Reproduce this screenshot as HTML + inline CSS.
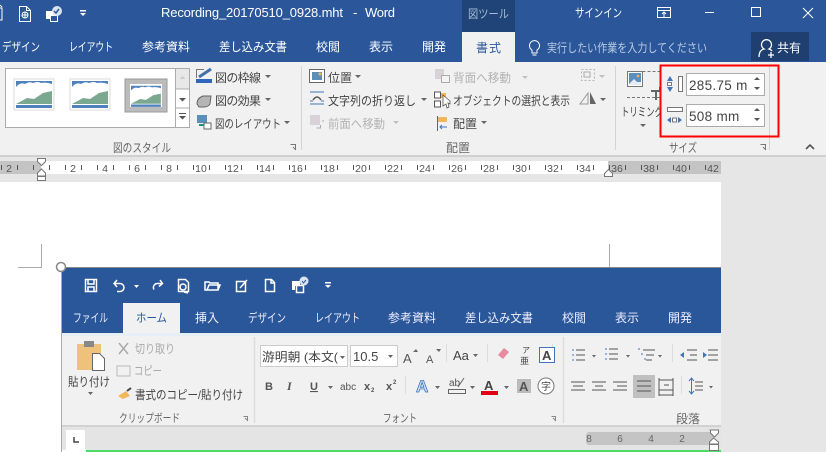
<!DOCTYPE html>
<html><head><meta charset="utf-8">
<style>
html,body{margin:0;padding:0;background:#fff}
svg{display:block;font-family:"Liberation Sans","Noto Sans CJK JP",sans-serif}
</style></head><body>
<svg width="826" height="452" viewBox="0 0 826 452" xmlns="http://www.w3.org/2000/svg">
<defs>
<pattern id="t" x="49" y="161" width="16" height="13" patternUnits="userSpaceOnUse"><rect width="1" height="5" y="4" fill="#555"/></pattern>
<g id="pic"><rect width="36" height="28" fill="#fff"/><rect y="1" width="36" height="9" fill="#4f81bd"/><path d="M0 7q4-5 9-3q4-3 8-1q5-2 8 0q5-1 11 1v10H0z" fill="#fff"/><path d="M0 24l11-6l7 1l9-6l9-2v13z" fill="#7aa890"/><rect y="25" width="36" height="3" fill="#4f81bd"/></g>
<filter id="b"><feGaussianBlur stdDeviation="0.3"/></filter>
</defs>
<rect width="826" height="452" fill="#fff"/>
<!-- title -->
<rect width="826" height="62" fill="#2b579a"/>
<rect x="462" width="53" height="32" fill="#204478"/>
<rect x="462" y="32" width="53" height="30" fill="#f1f1f1"/>
<rect x="751" y="32" width="58" height="29" fill="#1e3f70"/>
<g fill="none" stroke="#fff" stroke-width="1">
<path d="M0 8h2v12h-2M2 7l-2-2"/>
<path d="M19.500 6.500h7l4 4v11h-11zM26.500 6.500v4h4"/><circle cx="25" cy="15" r="3"/><path d="M25 12v6M22 15h6"/>
<rect x="50.500" y="15.500" width="7" height="6"/>
<path d="M657.500 7.500h13v10h-13zM657.500 10.500h13M664 17v-5M662 14l2-2 2 2"/>
<path d="M705 12.500h9"/><rect x="751.500" y="7.500" width="9" height="9" stroke-width="1"/>
<path d="M803 8l10 10M813 8l-10 10"/>
<path d="M537 53v-3a5 5 0 1 0-5 0v3zM532.500 55h4"/>
</g>
<path d="M46 11h7l2 2v2h-4v4h-5z" fill="#fff"/>
<rect x="80" y="10" width="6" height="1.500" fill="#fff"/><path d="M80 13h6l-3 3z" fill="#fff"/>
<circle cx="57" cy="11" r="5" fill="#d8e2f0"/><path d="M54 11l2 2 3-4" fill="none" stroke="#2b579a" stroke-width="1.500"/>
<g fill="#fff" font-size="12">
<text x="161" y="17" font-size="13" textLength="182">Recording_20170510_0928.mht</text>
<text x="353" y="17" font-size="13">-</text>
<text x="365" y="17" font-size="13" textLength="30">Word</text>
<text x="575" y="17" textLength="47" lengthAdjust="spacingAndGlyphs">サインイン</text>
<text x="2" y="51" textLength="38" lengthAdjust="spacingAndGlyphs">デザイン</text>
<text x="69" y="51" textLength="44" lengthAdjust="spacingAndGlyphs">レイアウト</text>
<text x="142" y="51" textLength="48">参考資料</text>
<text x="219" y="51" textLength="68" lengthAdjust="spacingAndGlyphs">差し込み文書</text>
<text x="316" y="51" textLength="24">校閲</text>
<text x="369" y="51" textLength="24">表示</text>
<text x="422" y="51" textLength="24">開発</text>
<text x="777" y="52" textLength="24">共有</text>
</g>
<text x="468" y="18" font-size="12" fill="#a9bdd8" textLength="41" lengthAdjust="spacingAndGlyphs">図ツール</text>
<text x="476" y="52" font-size="12" fill="#2b579a" textLength="25">書式</text>
<text x="547" y="52" font-size="12" fill="#b9cbe2" textLength="160" lengthAdjust="spacingAndGlyphs">実行したい作業を入力してください</text>
<path d="M759 57q0-7 5-8a5 5 0 1 1 5 0q2 .6 3 2M771 52v6M768 55h6" fill="none" stroke="#fff" stroke-width="1.300"/>

<!-- ribbon -->
<rect y="62" width="826" height="93" fill="#f1f1f1"/>
<rect y="155" width="826" height="2" fill="#d0d0d0"/>
<rect y="157" width="826" height="25" fill="#e6e6e6"/>
<!-- gallery -->
<rect x="5.500" y="68.500" width="184" height="59" fill="#fff" stroke="#ababab"/>
<rect x="176" y="69" width="13" height="20" fill="#e8e8e8"/>
<path d="M175.500 69v58M176 89h13M176 108h13" stroke="#ababab" fill="none"/>
<path d="M182.500 76l-3 3h6z" fill="#ccc"/><path d="M179 98h7l-3.500 3.500z" fill="#555"/><path d="M179 116h7l-3.500 3.500z" fill="#555"/><rect x="179" y="113" width="7" height="1" fill="#555"/>
<rect x="14" y="79" width="40" height="31" fill="#fff" stroke="#ccc" stroke-width=".7"/><use href="#pic" x="16" y="80"/>
<rect x="70" y="79" width="40" height="31" fill="#fff" stroke="#ccc" stroke-width=".7"/><use href="#pic" x="72" y="80"/>
<rect x="125" y="79" width="42" height="33" fill="#bbb" stroke="#999"/><rect x="130" y="84" width="32" height="23" fill="#fff"/><use href="#pic" transform="translate(131 85) scale(.83 .78)"/>
<!-- group icons -->
<rect x="196" y="79" width="16" height="4" fill="#2f67bd"/><path d="M199 77l12-8" stroke="#4472a8" stroke-width="3"/><path d="M196.500 69v9M196 69.500h8" stroke="#777"/>
<path d="M197 104q0-6 6-8h8l-1 8q-2 3-6 3h-5z" fill="#b5b5b5" stroke="#666"/>
<rect x="197" y="115" width="10" height="8" fill="#5b8fb9"/><rect x="204" y="123" width="7" height="6" fill="#fff" stroke="#666"/><path d="M199 125h5" stroke="#2b8c76" stroke-width="2"/>
<rect x="309.500" y="69.500" width="15" height="13" fill="#fff" stroke="#666"/><rect x="312" y="72" width="10" height="8" fill="#5b8fb9"/><circle cx="320" cy="74" r="1.500" fill="#f0b85a"/>
<path d="M310 92h14M310 104h14M310 101h3M321 101h3" stroke="#3f75bb"/><path d="M313 100q4-6 8 0" stroke="#555" stroke-width="1.500" fill="none"/>
<rect x="310" y="115" width="10" height="10" fill="#d6d2d6"/><path d="M320.500 125v3h-4M322 121h2" stroke="#aaa" fill="none"/>
<rect x="435" y="69" width="9" height="10" fill="#d6d2d6"/><rect x="441.500" y="75.500" width="8" height="7" fill="#f4f4f4" stroke="#aaa"/>
<path d="M434.500 92h6v6h-6zM434.500 101h6v6h-6z" fill="#fff" stroke="#555"/><rect x="441" y="93" width="5" height="5" fill="#f0b85a"/><path d="M443 95l7 6v3l-2-1 1 4-2 1-1-4-3 2z" fill="#fff" stroke="#555" stroke-width=".8"/>
<path d="M437.500 116v15" stroke="#666"/><rect x="438" y="117" width="9" height="5" fill="#f0b85a"/><path d="M447 127h-7M442 125l-2 2 2 2" stroke="#3f75bb" fill="none"/>
<path d="M581.500 69.500h13v11h-13z" fill="none" stroke="#b5b5b5" stroke-dasharray="2 2"/><rect x="584" y="72" width="6" height="5" fill="none" stroke="#aaa"/>
<path d="M588 93v11h-8z" fill="none" stroke="#999"/><path d="M590 92l6 12h-6z" fill="#666"/>
<g fill="#444" font-size="12">
<text x="215" y="82" textLength="46">図の枠線</text>
<text x="215" y="105" textLength="46">図の効果</text>
<text x="215" y="128" textLength="66" lengthAdjust="spacingAndGlyphs">図のレイアウト</text>
<text x="328" y="82" textLength="24">位置</text>
<text x="328" y="105" textLength="88" lengthAdjust="spacingAndGlyphs">文字列の折り返し</text>
<text x="453" y="105" textLength="117" lengthAdjust="spacingAndGlyphs">オブジェクトの選択と表示</text>
<text x="453" y="128" textLength="24">配置</text>
</g>
<g fill="#b3b3b3" font-size="12">
<text x="328" y="128" textLength="57" lengthAdjust="spacingAndGlyphs">前面へ移動</text>
<text x="453" y="82" textLength="58" lengthAdjust="spacingAndGlyphs">背面へ移動</text>
</g>
<g fill="#666" font-size="12">
<text x="113" y="152" textLength="58" lengthAdjust="spacingAndGlyphs">図のスタイル</text>
<text x="446" y="152" textLength="24">配置</text>
<text x="669" y="152" textLength="28" lengthAdjust="spacingAndGlyphs">サイズ</text>
</g>
<g fill="#666"><path d="M265 75h6l-3 3zM265 98h6l-3 3zM284 121h6l-3 3zM355 75h6l-3 3zM421 98h6l-3 3zM481 121h6l-3 3zM600 98h6l-3 3zM640 124h6l-3 3z"/></g>
<g fill="#c0c0c0"><path d="M393 121h6l-3 3zM522 76h6l-3 3zM599 75h6l-3 3z"/></g>
<path d="M301.500 66v84M615.500 66v84M769.500 66v84" stroke="#d4d4d4"/>
<path d="M290.500 144.500h5v5M293 147l3 3M760.500 144.500h5v5M763 147l3 3" stroke="#777" fill="none"/>
<path d="M806 149l4-4 4 4" stroke="#555" stroke-width="1.600" fill="none"/>
<!-- crop -->
<path d="M627 97.500h34V72" stroke="#777" fill="none" stroke-dasharray="3 2"/><path d="M642.500 71.500h18" stroke="#777" stroke-dasharray="3 2"/>
<rect x="627.500" y="71.500" width="15" height="15" fill="#fff" stroke="#777"/><rect x="629" y="73" width="12" height="12" fill="#5c8fbf"/><path d="M629 84l5-5 3 3 4 0v3h-12z" fill="#e5edf5"/><circle cx="638" cy="76" r="1.300" fill="#f0b85a"/>
<path d="M651 91h9v-4M656 100v-9" stroke="#666" stroke-width="2" fill="none"/>
<svg x="620" y="104" width="41" height="20"><text x="1" y="12" font-size="12" fill="#444" textLength="42" lengthAdjust="spacingAndGlyphs">トリミング</text></svg>
<!-- size -->
<rect x="686.500" y="73.500" width="78" height="22" fill="#fff" stroke="#ababab"/>
<rect x="686.500" y="104.500" width="78" height="22" fill="#fff" stroke="#ababab"/>
<svg x="689" y="74" width="58" height="22"><text x="0" y="16" font-size="13.500" fill="#444" letter-spacing=".3">285.75 mm</text></svg>
<text x="689" y="121" font-size="13.500" fill="#444" letter-spacing=".3">508 mm</text>
<path d="M754 80h6l-3-3zM754 87h6l-3 3zM754 111h6l-3-3zM754 118h6l-3 3z" fill="#555"/>
<rect x="678.500" y="76.500" width="4" height="15" fill="#fff" stroke="#777"/>
<path d="M667 81l3-5 3 5zM667 87l3 5 3-5z" fill="#3f75bb"/><rect x="667.500" y="82.500" width="4" height="3" fill="#fff" stroke="#777"/>
<path d="M667.500 107.500h15v4h-15z" fill="#fff" stroke="#777"/>
<path d="M667 120l4-3v6zM682 120l-4-3v6z" fill="#3f75bb"/><rect x="672.500" y="118" width="4" height="4" fill="#fff" stroke="#777"/>
<rect x="660.500" y="65.500" width="118" height="71" fill="none" stroke="#f00" stroke-width="2"/>

<!-- main ruler -->
<rect x="0" y="161" width="721" height="13" fill="#fff"/>
<rect x="0" y="161" width="41" height="13" fill="#c4c4c4"/>
<rect x="608" y="161" width="113" height="13" fill="#c4c4c4"/>
<rect x="0" y="161" width="721" height="13" fill="url(#t)"/>
<g font-size="10.500" fill="#555" text-anchor="middle">
<text x="9" y="172">2</text><text x="73" y="172">2</text><text x="105" y="172">4</text><text x="137" y="172">6</text><text x="169" y="172">8</text><text x="201" y="172">10</text><text x="233" y="172">12</text><text x="265" y="172">14</text><text x="297" y="172">16</text><text x="329" y="172">18</text><text x="361" y="172">20</text><text x="393" y="172">22</text><text x="425" y="172">24</text><text x="457" y="172">26</text><text x="489" y="172">28</text><text x="521" y="172">30</text><text x="553" y="172">32</text><text x="585" y="172">34</text><text x="617" y="172">36</text><text x="649" y="172">38</text><text x="681" y="172">40</text><text x="713" y="172">42</text>
</g>
<path d="M37.500 158.500h8v3l-4 4-4-4zM37.500 176v-3l4-4 4 4v3zM37.500 176.500h8v4h-8z" fill="#fff" stroke="#777"/>
<path d="M604.500 176.500v-3l4-4 4 4v3z" fill="#fff" stroke="#777"/>
<!-- page -->
<rect x="0" y="182" width="721" height="270" fill="#fff"/>
<rect x="721" y="182" width="105" height="270" fill="#e6e6e6"/>
<path d="M18 267.500h23.500V244M609.500 244v24" stroke="#aaa" fill="none"/>

<!-- embedded screenshot -->
<g filter="url(#b)">
<rect x="61" y="268" width="660" height="65" fill="#2b579a"/>
<rect x="123" y="303" width="57" height="30" fill="#f1f1f1"/>
<rect x="62" y="333" width="659" height="92" fill="#f1f1f1"/>
<rect x="62" y="333" width="659" height="3" fill="#e6eff8"/>
<rect x="62" y="425" width="659" height="25" fill="#e4e4e4"/>
<rect x="62" y="425" width="659" height="2" fill="#d2d2d2"/>
<rect x="66" y="430" width="19" height="20" fill="#fff"/>
<path d="M74 437v5h5" stroke="#444" stroke-width="1.500" fill="none"/>
<rect x="586" y="432" width="128" height="13" rx="3" fill="#c4c4c4"/>
<rect x="86" y="450" width="635" height="2" fill="#4fdb6a"/>
<g fill="none" stroke="#fff" stroke-width="1.500">
<path d="M85.500 279.500h11v12h-11zM88 280v4h6v-4M88 291v-4h6v4"/>
<path d="M117 280l-3 3.500 3 3.500M114 283.500h6a4 4 0 0 1 0 8h-3"/>
<path d="M160 280l2.500 3.500-3.500 3M162 283.500h-4a4 4 0 0 0-4 6"/>
<path d="M178.500 279.500h7l3 3v9h-10zM184 292l4 1"/><circle cx="183" cy="287" r="3"/>
<path d="M205 290v-8h4l1 1h8v7zM207 290l2-5h11l-2 5z"/>
<path d="M236.500 281.500h9v10h-9zM240 288l7-8"/>
<path d="M265.500 279.500h6l3 3v9h-9zM271 280v3h3"/>
<rect x="296.500" y="285.500" width="7" height="7"/>
</g>
<path d="M292 281h8v5h-5v4h-3z" fill="#fff"/><rect x="325" y="282" width="6" height="1.500" fill="#fff"/><path d="M325 285h6l-3 3z" fill="#fff"/>
<circle cx="304" cy="281" r="4.500" fill="#dbe5f2"/><path d="M302 281l1.500 2 2.500-3" stroke="#2b579a" fill="none"/>
<path d="M134 285h5l-2.500 3z" fill="#fff"/>
<g font-size="12" fill="#eef">
<text x="73" y="322" textLength="35" lengthAdjust="spacingAndGlyphs">ファイル</text>
<text x="195" y="322" textLength="24">挿入</text>
<text x="248" y="322" textLength="38" lengthAdjust="spacingAndGlyphs">デザイン</text>
<text x="315" y="322" textLength="45" lengthAdjust="spacingAndGlyphs">レイアウト</text>
<text x="388" y="322" textLength="48">参考資料</text>
<text x="465" y="322" textLength="68" lengthAdjust="spacingAndGlyphs">差し込み文書</text>
<text x="562" y="322" textLength="24">校閲</text>
<text x="615" y="322" textLength="24">表示</text>
<text x="668" y="322" textLength="24">開発</text>
</g>
<text x="136" y="322" font-size="12" fill="#2b579a" textLength="31" lengthAdjust="spacingAndGlyphs">ホーム</text>
<rect x="77" y="344" width="24" height="26" fill="#eec27a"/><rect x="84" y="341" width="10" height="6" fill="#888"/>
<path d="M92.500 353.500h7l5 5v12h-12z" fill="#fff" stroke="#666"/>
<rect x="260.500" y="345.500" width="87" height="21" fill="#fff" stroke="#ccc"/>
<rect x="350.500" y="345.500" width="47" height="21" fill="#fff" stroke="#ccc"/>
<g font-size="12" fill="#444">
<text x="68" y="386" textLength="42" lengthAdjust="spacingAndGlyphs">貼り付け</text>
<text x="135" y="399" textLength="108" lengthAdjust="spacingAndGlyphs">書式のコピー/貼り付け</text>
<text x="262" y="361" textLength="76" lengthAdjust="spacingAndGlyphs">游明朝 (本文(</text>
<text x="353" y="361" font-family="Liberation Sans" font-size="13">10.5</text>
<text x="453" y="360" font-family="Liberation Sans" font-size="13">Aa</text>
</g>
<g font-size="12" fill="#aaa">
<text x="135" y="353" textLength="40" lengthAdjust="spacingAndGlyphs">切り取り</text>
<text x="134" y="375" textLength="28" lengthAdjust="spacingAndGlyphs">コピー</text>
</g>
<path d="M119 343l9 11M128 343l-9 11" stroke="#aaa" stroke-width="1.500"/><rect x="117" y="366" width="13" height="10" fill="none" stroke="#bbb"/>
<path d="M118 396l8-5 4 5-7 3z" fill="#f0b85a"/><path d="M127 391l4-3" stroke="#444" stroke-width="2"/>
<path d="M88 392h5l-2.500 3z" fill="#666"/>
<g font-size="11.500" fill="#666">
<text x="119" y="422" textLength="61" lengthAdjust="spacingAndGlyphs">クリップボード</text>
<text x="383" y="422" textLength="34" lengthAdjust="spacingAndGlyphs">フォント</text>
<text x="676" y="423" font-size="12" textLength="24">段落</text>
</g>
<path d="M243.500 416.500h4v4M245 418l3 3M551.500 416.500h4v4M553 418l3 3" stroke="#888" fill="none"/>
<path d="M254.500 337v86M563.500 337v86" stroke="#ddd" stroke-width="1.500"/>
<path d="M340 356h5l-2.500 3zM388 355h5l-2.500 3zM473 354h5l-2.500 3zM328 386h5l-2.500 3zM435 386h5l-2.500 3zM470 386h5l-2.500 3zM504 386h5l-2.500 3zM592 355h4l-2 2.500zM626 355h4l-2 2.500zM658 355h4l-2 2.500zM709 386h4l-2 2.500z" fill="#666"/>
<g fill="#555" font-family="Liberation Sans" font-weight="bold">
<text x="403" y="363" font-size="13" font-weight="normal">A</text><text x="426" y="363" font-size="11" font-weight="normal">A</text>
<text x="265" y="390" font-size="11">B</text><text x="287" y="390" font-size="12" font-style="italic" font-family="Liberation Serif">I</text><text x="310" y="390" font-size="11" text-decoration="underline">U</text>
<text x="340" y="390" font-size="10" font-weight="normal">abc</text><text x="364" y="390" font-size="11">x</text><text x="371" y="392" font-size="6">2</text><text x="386" y="390" font-size="11">x</text><text x="393" y="384" font-size="6">2</text>
</g>
<path d="M413 352l3-3 2 3zM436 349l3 3 2-3z" fill="#666"/>
<path d="M446.500 344v18M487.500 344v18M552.500 344v18M405.500 376v18M672.500 344v18M681.500 376v18" stroke="#ddd"/>
<text x="416" y="392" font-size="17" fill="#cfe0f5" stroke="#3f75bb" stroke-width=".8" font-family="Liberation Sans" font-weight="bold">A</text>
<text x="449" y="386" font-size="10" fill="#555" font-family="Liberation Sans">ab</text><path d="M448.500 389.500h17v4h-17zM458 387l6-9" stroke="#666" fill="none"/>
<text x="484" y="390" font-size="13" fill="#444" font-family="Liberation Sans" font-weight="bold">A</text><rect x="481" y="391" width="17" height="4" fill="#e00012"/>
<rect x="517" y="379" width="14" height="14" fill="#bbb"/><text x="519" y="391" font-size="13" fill="#555" font-family="Liberation Sans" font-weight="bold">A</text>
<circle cx="546" cy="386" r="8" fill="#fff" stroke="#777"/><text x="541" y="390" font-size="10" fill="#444">字</text>
<path d="M498 355l6-7 5 4-6 7z" fill="#e88aa0"/>
<text x="520" y="364" font-size="9" fill="#444">亜</text><text x="522" y="353" font-size="8" fill="#444">ア</text>
<rect x="539.500" y="347.500" width="15" height="15" fill="#fff" stroke="#3f75bb"/><text x="542" y="360" font-size="13" fill="#444" font-family="Liberation Sans" font-weight="bold">A</text>
<path d="M576 350h9M576 355h9M576 360h9M609 349h9M609 354h9M609 359h9M643 350h12M646 355h8M646 360h6M687 350h10M690 355h7M687 360h10M708 350h10M708 355h10M708 360h10" stroke="#555" fill="none"/>
<path d="M572 350h2M572 355h2M572 360h2M605 349h2M605 354h2M605 359h2M638 349h2M641 354h2M644 359h2" stroke="#3f75bb"/>
<path d="M680 355l4-3v6zM707 355l-4-3v6z" fill="#3f75bb"/>
<rect x="633" y="375" width="22" height="23" fill="#c0c0c0"/>
<path d="M571 382h14M573 386h10M571 390h14M592 382h14M595 386h8M592 390h14M613 382h14M617 386h10M613 390h14M637 381h14M637 386h14M637 391h14M659 380h14M659 390h14M659 395h14M659 378v18M673 378v18M664 385h5M695 382h8M695 386h8M695 390h8" stroke="#555" fill="none"/>
<path d="M691.500 378v16M689 381l2.500-3 2.500 3M689 391l2.500 3 2.500-3" stroke="#3f75bb" fill="none"/>
<path d="M61.500 268v184" stroke="#aaa"/>
<path d="M61 267.500h660" stroke="#888"/>
</g>
<circle cx="61" cy="267" r="4.500" fill="#fff" stroke="#888" stroke-width="1.500"/>
<g font-size="10" fill="#666" text-anchor="middle" filter="url(#b)"><text x="589" y="442">8</text><text x="620" y="442">6</text><text x="651" y="442">4</text><text x="682" y="442">2</text></g>
<path d="M709.500 430h9v3l-4 4-4-4v-3zM709.500 444v-2l4-4 5 4v2zM709.500 444.500h9v6h-9z" fill="#fff" stroke="#777"/>
</svg>
</body></html>
